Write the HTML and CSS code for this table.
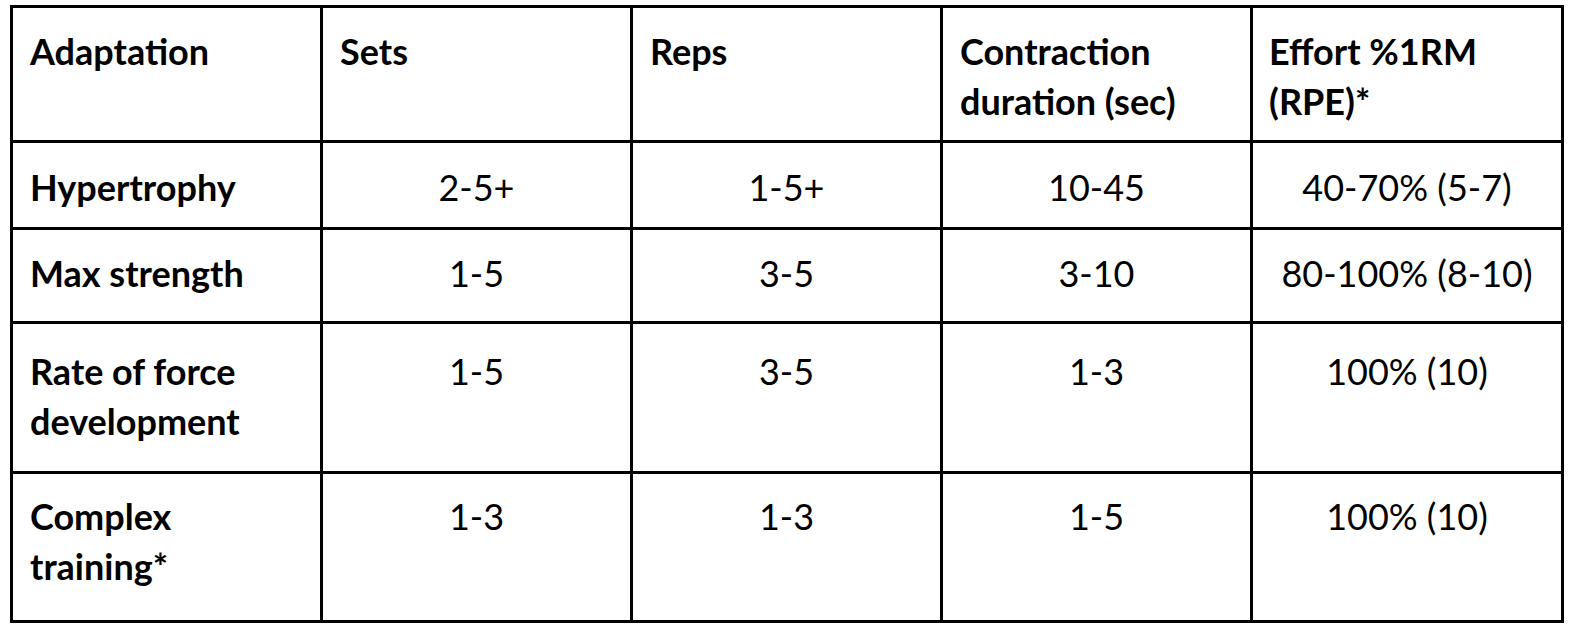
FILE: index.html
```html
<!DOCTYPE html>
<html lang="en">
<head>
<meta charset="utf-8">
<title>Training adaptations</title>
<link rel="stylesheet" href="styles.css">
</head>
<body>
<table class="grid">
  <colgroup>
    <col class="c1"><col class="c2"><col class="c3"><col class="c4"><col class="c5">
  </colgroup>
  <tr class="r-head">
    <th>Adaptation</th>
    <th>Sets</th>
    <th>Reps</th>
    <th>Contraction duration (sec)</th>
    <th>Effort %1RM (RPE)*</th>
  </tr>
  <tr class="r-hyp">
    <th>Hypertrophy</th>
    <td>2-5+</td>
    <td>1-5+</td>
    <td>10-45</td>
    <td>40-70% (5-7)</td>
  </tr>
  <tr class="r-max">
    <th>Max strength</th>
    <td>1-5</td>
    <td>3-5</td>
    <td>3-10</td>
    <td>80-100% (8-10)</td>
  </tr>
  <tr class="r-rfd">
    <th>Rate of force development</th>
    <td>1-5</td>
    <td>3-5</td>
    <td>1-3</td>
    <td>100% (10)</td>
  </tr>
  <tr class="r-cx">
    <th>Complex training*</th>
    <td>1-3</td>
    <td>1-3</td>
    <td>1-5</td>
    <td>100% (10)</td>
  </tr>
</table>
</body>
</html>
```
FILE: styles.css
```css
html, body {
  margin: 0;
  padding: 0;
  background: #ffffff;
}

body {
  padding: 5px 0 0 10px;
  font-family: "Lato", "Liberation Sans", sans-serif;
  color: #000000;
}

.grid {
  border-collapse: separate;
  border-spacing: 0;
  table-layout: fixed;
  width: 1554px;
  border-top: 3px solid #000;
  border-left: 3px solid #000;
}

.c1, .c2, .c3, .c4 { width: 310px; }
.c5 { width: 311px; }

.grid th,
.grid td {
  border-right: 3px solid #000;
  border-bottom: 3px solid #000;
  vertical-align: top;
  font-size: 36px;
  line-height: 50px;
  padding-left: 17px;
  padding-right: 17px;
}

.grid th {
  font-weight: 700;
  text-align: left;
}

.grid td {
  font-weight: 400;
  text-align: center;
  padding-left: 8px;
  padding-right: 8px;
}

.r-head th { padding-top: 18px; padding-bottom: 14px; }
.r-head th:last-child { padding-left: 16px; padding-right: 8px; }
.r-hyp th, .r-hyp td { padding-top: 19px; padding-bottom: 15px; }
.r-max th, .r-max td { padding-top: 18px; padding-bottom: 23px; }
.r-rfd th, .r-rfd td { padding-top: 22px; padding-bottom: 25px; }
.r-cx th, .r-cx td { padding-top: 17px; padding-bottom: 29px; }
```
